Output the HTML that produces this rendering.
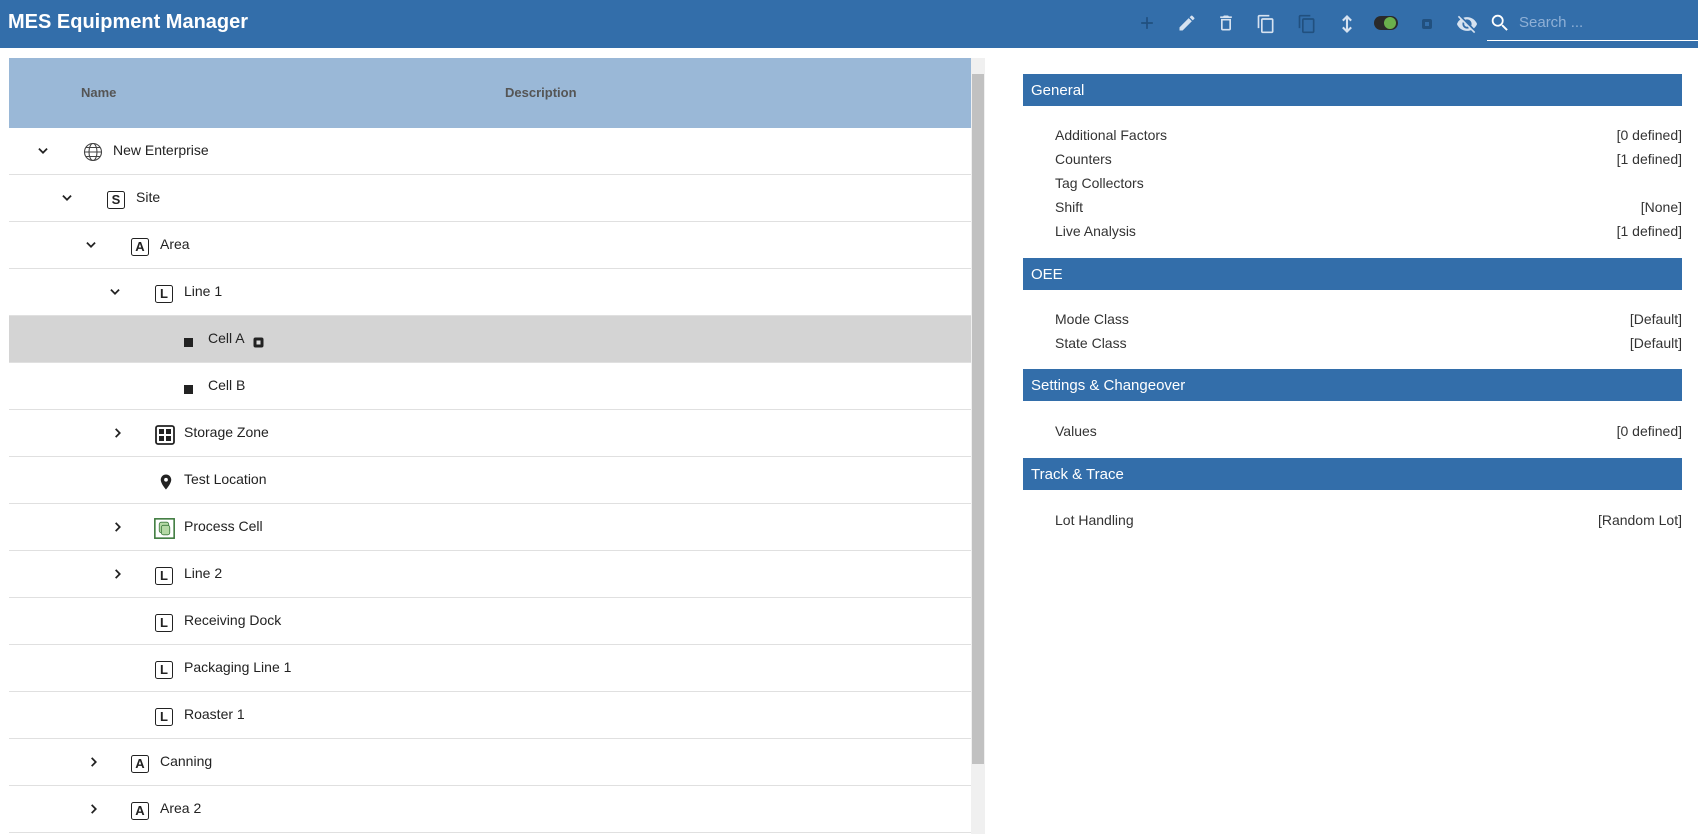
<!DOCTYPE html>
<html><head><meta charset="utf-8"><style>
*{box-sizing:border-box;margin:0;padding:0}
body{width:1698px;height:834px;overflow:hidden;background:#fff;font-family:"Liberation Sans",Arial,sans-serif;color:#222;position:relative}
.top{position:absolute;left:0;top:0;width:1698px;height:48px;background:#336eaa}
.title{position:absolute;left:8px;top:11px;color:#fff;font-weight:bold;font-size:20px}
.ic{position:absolute;top:13px}
.search{position:absolute;left:1487px;top:0;width:211px;height:41px;border-bottom:1.5px solid #fff}
.search span{position:absolute;left:32px;top:14px;color:#8fb0d6;font-size:15px}
.thead{position:absolute;left:9px;top:58px;width:962px;height:70px;background:#9ab8d7;font-weight:bold;font-size:13px;color:#555}
.thead span{position:absolute;top:27px}
.row{position:absolute;left:9px;width:962px;height:47px;border-bottom:1.5px solid #e0e0e0;font-size:14px}
.row.sel{background:#d4d4d4}
.row .t{position:absolute;top:14px}
.row svg{position:absolute}
.sb{position:absolute;left:971px;top:58px;width:14px;height:776px;background:#f0f0f0}
.sb div{position:absolute;left:1px;top:16px;width:12px;height:690px;background:#c1c1c1}
.sec{position:absolute;left:1023px;width:659px;height:32px;background:#336eaa;color:#fff;font-size:15px;padding:8px 8px}
.it{position:absolute;left:1055px;width:627px;font-size:14px;color:#333}
.it b{font-weight:normal;position:absolute;right:0;top:0}
.box{position:absolute;width:18px;height:18px;border:1.8px solid #222;border-radius:2.5px;font-size:13px;font-weight:bold;text-align:center;line-height:15px}
</style></head><body>
<div class="top">
<div class="title">MES Equipment Manager</div>
<svg class="ic" style="left:1137px" width="20" height="20" viewBox="0 0 24 24"><path d="M12 5v14M5 12h14" stroke="#21507f" stroke-width="2"/></svg>
<svg class="ic" style="left:1177px" width="20" height="20" viewBox="0 0 24 24"><path d="M3 17.25V21h3.75L17.8 9.94l-3.75-3.75L3 17.25zM20.7 7.04a1 1 0 000-1.41l-2.34-2.34a1 1 0 00-1.41 0l-1.83 1.83 3.75 3.75 1.83-1.83z" fill="#d6e2f0"/></svg>
<svg class="ic" style="left:1216px" width="20" height="20" viewBox="0 0 24 24"><path d="M6 19c0 1.1.9 2 2 2h8c1.1 0 2-.9 2-2V7H6v12zM8 9h8v10H8V9zm7.5-5l-1-1h-5l-1 1H5v2h14V4z" fill="#d6e2f0"/></svg>
<svg class="ic" style="left:1256px" width="20" height="22" viewBox="0 0 24 24"><path d="M16 1H4c-1.1 0-2 .9-2 2v14h2V3h12V1zm3 4H8c-1.1 0-2 .9-2 2v14c0 1.1.9 2 2 2h11c1.1 0 2-.9 2-2V7c0-1.1-.9-2-2-2zm0 16H8V7h11v14z" fill="#d6e2f0"/></svg>
<svg class="ic" style="left:1297px" width="20" height="22" viewBox="0 0 24 24"><path d="M16 1H4c-1.1 0-2 .9-2 2v14h2V3h12V1zm3 4H8c-1.1 0-2 .9-2 2v14c0 1.1.9 2 2 2h11c1.1 0 2-.9 2-2V7c0-1.1-.9-2-2-2zm0 16H8V7h11v14z" fill="#21507f"/></svg>
<svg class="ic" style="left:1337px" width="20" height="22" viewBox="0 0 24 24"><path d="M7 8l5-5 5 5M7 16l5 5 5-5M12 3v18" stroke="#d6e2f0" stroke-width="2.5" fill="none"/></svg>
<svg class="ic" style="left:1374px;top:15px" width="24" height="16" viewBox="0 0 24 16"><rect x="0" y="1" width="24" height="14" rx="7" fill="#2a2a2a"/><circle cx="16" cy="8" r="6" fill="#6ab04c"/></svg>
<svg class="ic" style="left:1420px;top:17px" width="14" height="14" viewBox="0 0 14 14"><rect x="2" y="2" width="10" height="10" rx="2" fill="#21507f"/><rect x="5" y="5" width="4" height="4" fill="#336eaa"/></svg>
<svg class="ic" style="left:1456px" width="22" height="22" viewBox="0 0 24 24"><path d="M12 7c2.76 0 5 2.24 5 5 0 .65-.13 1.26-.36 1.83l2.920 2.92c1.51-1.26 2.7-2.89 3.43-4.75-1.73-4.39-6-7.5-11-7.5-1.4 0-2.740.25-3.98.7l2.16 2.16C10.74 7.13 11.35 7 12 7zM2 4.27l2.28 2.28.46.46A11.8 11.8 0 001 12c1.73 4.39 6 7.5 11 7.5 1.55 0 3.03-.3 4.38-.84l.42.42L19.73 22 21 20.73 3.27 3 2 4.27zM7.53 9.8l1.55 1.55c-.05.21-.08.43-.08.65 0 1.66 1.34 3 3 3 .22 0 .44-.03.65-.08l1.55 1.55c-.67.33-1.410.53-2.2.53-2.76 0-5-2.24-5-5 0-.79.2-1.53.53-2.2z" fill="#d6e2f0"/></svg>
<div class="search"><svg style="position:absolute;left:2px;top:12px" width="22" height="22" viewBox="0 0 24 24"><path d="M15.5 14h-.79l-.28-.27A6.47 6.47 0 0016 9.5 6.5 6.5 0 109.5 16c1.61 0 3.09-.59 4.23-1.57l.27.28v.79l5 4.99L20.49 19l-4.99-5zm-6 0C7.01 14 5 11.99 5 9.5S7.01 5 9.5 5 14 7.01 14 9.5 11.99 14 9.5 14z" fill="#fff"/></svg><span>Search ...</span></div>
</div>

<div class="thead"><span style="left:72px">Name</span><span style="left:496px">Description</span></div>
<div class="sb"><div></div></div>

<div class="row" style="top:128px"><svg style="left:27px;top:16px" width="14" height="14" viewBox="0 0 24 24"><path d="M5 8l7 7 7-7" stroke="#222" stroke-width="3" fill="none"/></svg>
<svg style="left:74px;top:14px" width="20" height="20" viewBox="0 0 20 20"><g stroke="#444" stroke-width="1.1" fill="none"><circle cx="10" cy="10" r="8.5"/><ellipse cx="10" cy="10" rx="4" ry="8.5"/><path d="M1.5 10h17M3 5.5h14M3 14.5h14"/></g></svg><span class="t" style="left:104px">New Enterprise</span></div>
<div class="row" style="top:175px"><svg style="left:51px;top:16px" width="14" height="14" viewBox="0 0 24 24"><path d="M5 8l7 7 7-7" stroke="#222" stroke-width="3" fill="none"/></svg><div class="box" style="left:98px;top:16px">S</div><span class="t" style="left:127px">Site</span></div>
<div class="row" style="top:222px"><svg style="left:75px;top:16px" width="14" height="14" viewBox="0 0 24 24"><path d="M5 8l7 7 7-7" stroke="#222" stroke-width="3" fill="none"/></svg><div class="box" style="left:122px;top:16px">A</div><span class="t" style="left:151px">Area</span></div>
<div class="row" style="top:269px"><svg style="left:99px;top:16px" width="14" height="14" viewBox="0 0 24 24"><path d="M5 8l7 7 7-7" stroke="#222" stroke-width="3" fill="none"/></svg><div class="box" style="left:146px;top:16px">L</div><span class="t" style="left:175px">Line 1</span></div>
<div class="row sel" style="top:316px"><svg style="left:175px;top:22px" width="10" height="10"><rect width="9" height="9" fill="#222"/></svg><span class="t" style="left:199px">Cell A</span><svg style="left:244px;top:21px" width="11" height="11"><rect x="0.5" y="0.5" width="10" height="10" rx="2" fill="#222"/><rect x="3.5" y="3.5" width="4" height="4" fill="#ddd"/></svg></div>
<div class="row" style="top:363px"><svg style="left:175px;top:22px" width="10" height="10"><rect width="9" height="9" fill="#222"/></svg><span class="t" style="left:199px">Cell B</span></div>
<div class="row" style="top:410px"><svg style="left:102px;top:16px" width="14" height="14" viewBox="0 0 24 24"><path d="M8 5l7 7-7 7" stroke="#222" stroke-width="3" fill="none"/></svg><svg style="left:146px;top:15px" width="20" height="20" viewBox="0 0 20 20"><rect x="1" y="1" width="18" height="18" rx="2" fill="none" stroke="#222" stroke-width="1.8"/><rect x="4" y="4" width="5" height="5" fill="#222"/><rect x="11" y="4" width="5" height="5" fill="#222"/><rect x="4" y="11" width="5" height="5" fill="#222"/><rect x="11" y="11" width="5" height="5" fill="#222"/></svg><span class="t" style="left:175px">Storage Zone</span></div>
<div class="row" style="top:457px"><svg style="left:148px;top:14px" width="18" height="22" viewBox="0 0 24 24"><path d="M12 2C8.13 2 5 5.13 5 9c0 5.25 7 13 7 13s7-7.75 7-13c0-3.87-3.13-7-7-7zm0 9.5a2.5 2.5 0 010-5 2.5 2.5 0 010 5z" fill="#222"/></svg><span class="t" style="left:175px">Test Location</span></div>
<div class="row" style="top:504px"><svg style="left:102px;top:16px" width="14" height="14" viewBox="0 0 24 24"><path d="M8 5l7 7-7 7" stroke="#222" stroke-width="3" fill="none"/></svg><svg style="left:145px;top:14px" width="21" height="21" viewBox="0 0 20 20"><rect x="0.8" y="0.8" width="18.4" height="18.4" fill="#fff" stroke="#3d7a3d" stroke-width="1.5"/><rect x="5" y="4" width="9" height="10" rx="2" fill="#b5d9a5" stroke="#3d7a3d" stroke-width=".8"/><rect x="7" y="7" width="8" height="9" rx="2" fill="#b5d9a5" stroke="#3d7a3d" stroke-width=".8"/></svg><span class="t" style="left:175px">Process Cell</span></div>
<div class="row" style="top:551px"><svg style="left:102px;top:16px" width="14" height="14" viewBox="0 0 24 24"><path d="M8 5l7 7-7 7" stroke="#222" stroke-width="3" fill="none"/></svg><div class="box" style="left:146px;top:16px">L</div><span class="t" style="left:175px">Line 2</span></div>
<div class="row" style="top:598px"><div class="box" style="left:146px;top:16px">L</div><span class="t" style="left:175px">Receiving Dock</span></div>
<div class="row" style="top:645px"><div class="box" style="left:146px;top:16px">L</div><span class="t" style="left:175px">Packaging Line 1</span></div>
<div class="row" style="top:692px"><div class="box" style="left:146px;top:16px">L</div><span class="t" style="left:175px">Roaster 1</span></div>
<div class="row" style="top:739px"><svg style="left:78px;top:16px" width="14" height="14" viewBox="0 0 24 24"><path d="M8 5l7 7-7 7" stroke="#222" stroke-width="3" fill="none"/></svg><div class="box" style="left:122px;top:16px">A</div><span class="t" style="left:151px">Canning</span></div>
<div class="row" style="top:786px"><svg style="left:78px;top:16px" width="14" height="14" viewBox="0 0 24 24"><path d="M8 5l7 7-7 7" stroke="#222" stroke-width="3" fill="none"/></svg><div class="box" style="left:122px;top:16px">A</div><span class="t" style="left:151px">Area 2</span></div>

<div class="sec" style="top:74px">General</div>
<div class="it" style="top:127px">Additional Factors<b>[0 defined]</b></div>
<div class="it" style="top:151px">Counters<b>[1 defined]</b></div>
<div class="it" style="top:175px">Tag Collectors</div>
<div class="it" style="top:199px">Shift<b>[None]</b></div>
<div class="it" style="top:223px">Live Analysis<b>[1 defined]</b></div>
<div class="sec" style="top:258px">OEE</div>
<div class="it" style="top:311px">Mode Class<b>[Default]</b></div>
<div class="it" style="top:335px">State Class<b>[Default]</b></div>
<div class="sec" style="top:369px">Settings &amp; Changeover</div>
<div class="it" style="top:423px">Values<b>[0 defined]</b></div>
<div class="sec" style="top:458px">Track &amp; Trace</div>
<div class="it" style="top:512px">Lot Handling<b>[Random Lot]</b></div>
</body></html>
